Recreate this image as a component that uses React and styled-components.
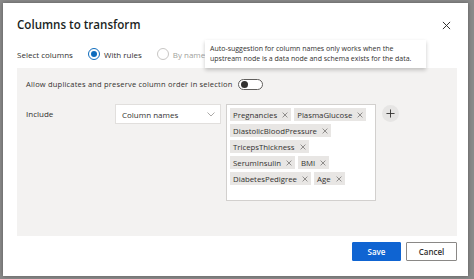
import styled, { createGlobalStyle } from "styled-components";

const GlobalStyle = createGlobalStyle`
  html, body {
    margin: 0;
    padding: 0;
    background: #8a8a8a;
    overflow: hidden;
  }
  body {
    font-family: "Open Sans", "Noto Sans", sans-serif;
    color: #323130;
  }
`;

const Screen = styled.div`
  width: 474px;
  height: 279px;
  padding: 3px 0 0 3px;
  box-sizing: border-box;
`;

const Dialog = styled.div`
  position: relative;
  width: 465px;
  height: 273px;
  background: #ffffff;
  box-shadow: 0 0 4px rgba(0, 0, 0, 0.35);
  display: flex;
  flex-direction: column;
  box-sizing: border-box;
`;

const Header = styled.div`
  display: flex;
  align-items: center;
  justify-content: space-between;
  padding: 14px 17px 0 14px;
  height: 16px;
`;

const Title = styled.h1`
  margin: 0;
  font-size: 11.6px;
  font-weight: 600;
  line-height: 16px;
  color: #201f1e;
`;

const CloseButton = styled.button`
  border: none;
  background: none;
  padding: 0;
  width: 9px;
  height: 9px;
  display: flex;
  cursor: pointer;
`;

const SelectRow = styled.div`
  display: flex;
  align-items: center;
  height: 16px;
  margin: 13px 0 0 14px;
  font-size: 8px;
`;

const RowLabel = styled.span`
  width: 71px;
`;

const RadioOption = styled.label`
  display: flex;
  align-items: center;
  gap: 4px;
  margin-right: 15px;
  color: ${(p) => (p.disabled ? "#a19f9d" : "#323130")};
`;

const RadioCircle = styled.span`
  width: 12px;
  height: 12px;
  border-radius: 50%;
  box-sizing: border-box;
  border: 1px solid ${(p) => (p.checked ? "#0f6cbd" : p.disabled ? "#c8c6c4" : "#323130")};
  display: flex;
  align-items: center;
  justify-content: center;

  &::after {
    content: "";
    display: ${(p) => (p.checked ? "block" : "none")};
    width: 6px;
    height: 6px;
    border-radius: 50%;
    background: #0f6cbd;
  }
`;

const Tooltip = styled.div`
  position: absolute;
  left: 202px;
  top: 37px;
  width: 221px;
  height: 28px;
  box-sizing: border-box;
  padding: 4px 5px 0;
  background: #ffffff;
  box-shadow: 0 1.5px 4px rgba(0, 0, 0, 0.22);
  font-size: 7px;
  line-height: 10px;
  color: #323130;
  z-index: 2;
`;

const Panel = styled.div`
  margin: 6px 11px 0 14px;
  height: 168px;
  background: #f3f2f1;
  padding: 10px 9px 0;
  box-sizing: border-box;
  font-size: 8px;
`;

const ToggleRow = styled.div`
  display: flex;
  align-items: center;
  gap: 5px;
  height: 12px;
  font-size: 7.5px;
  letter-spacing: 0.2px;
`;

const Toggle = styled.span`
  width: 25px;
  height: 11px;
  border: 1px solid #605e5c;
  border-radius: 7px;
  box-sizing: border-box;
  display: flex;
  align-items: center;
  padding-left: 2px;
  background: #ffffff;

  &::after {
    content: "";
    width: 7px;
    height: 7px;
    border-radius: 50%;
    background: #323130;
  }
`;

const IncludeRow = styled.div`
  display: flex;
  align-items: flex-start;
  margin-top: 14px;
`;

const IncludeLabel = styled.span`
  width: 89px;
  line-height: 20px;
`;

const Dropdown = styled.div`
  width: 106px;
  height: 20px;
  box-sizing: border-box;
  background: #ffffff;
  border: 1px solid #e1dfdd;
  display: flex;
  align-items: center;
  justify-content: space-between;
  padding: 0 5px 0 6px;
  margin-right: 5px;
`;

const TagBox = styled.div`
  width: 150px;
  height: 97px;
  box-sizing: border-box;
  background: #ffffff;
  border: 1px solid #d2d0ce;
  padding: 3px 3px;
  display: flex;
  flex-wrap: wrap;
  align-content: flex-start;
  gap: 3px 3px;
`;

const Tag = styled.span`
  display: flex;
  align-items: center;
  height: 13px;
  padding: 0 3px;
  gap: 5px;
  background: #e8e6e4;
  font-size: 7.8px;
  white-space: nowrap;
`;

const AddButton = styled.button`
  width: 17px;
  height: 17px;
  margin: 1px 0 0 6px;
  border: none;
  border-radius: 50%;
  background: #e6e5e4;
  padding: 0;
  display: flex;
  align-items: center;
  justify-content: center;
`;

const Footer = styled.div`
  display: flex;
  justify-content: flex-end;
  gap: 5px;
  margin: 6px 11px 0 0;
`;

const Button = styled.button`
  height: 19px;
  width: ${(p) => p.width}px;
  box-sizing: border-box;
  font-family: "Open Sans", "Noto Sans", sans-serif;
  font-size: 8px;
  font-weight: 600;
  padding: 0;
  border: 1px solid ${(p) => (p.primary ? "#0f64d2" : "#8a8886")};
  background: ${(p) => (p.primary ? "#0f64d2" : "#ffffff")};
  color: ${(p) => (p.primary ? "#ffffff" : "#323130")};
  border-radius: 1px;
`;

const XIcon = ({ size = 6, color = "#605e5c" }) => (
  <svg width={size} height={size} viewBox="0 0 10 10">
    <path d="M1 1L9 9M9 1L1 9" stroke={color} strokeWidth="1.1" />
  </svg>
);

const columns = [
  "Pregnancies",
  "PlasmaGlucose",
  "DiastolicBloodPressure",
  "TricepsThickness",
  "SerumInsulin",
  "BMI",
  "DiabetesPedigree",
  "Age",
];

export default function App() {
  return (
    <>
      <GlobalStyle />
      <Screen>
        <Dialog>
          <Header>
            <Title>Columns to transform</Title>
            <CloseButton aria-label="Close">
              <XIcon size={9} color="#323130" />
            </CloseButton>
          </Header>

          <SelectRow>
            <RowLabel>Select columns</RowLabel>
            <RadioOption>
              <RadioCircle checked />
              With rules
            </RadioOption>
            <RadioOption disabled>
              <RadioCircle disabled />
              By name
            </RadioOption>
          </SelectRow>

          <Tooltip>
            Auto-suggestion for column names only works when the
            <br />
            upstream node is a data node and schema exists for the data.
          </Tooltip>

          <Panel>
            <ToggleRow>
              Allow duplicates and preserve column order in selection
              <Toggle />
            </ToggleRow>
            <IncludeRow>
              <IncludeLabel>Include</IncludeLabel>
              <Dropdown>
                Column names
                <svg width="8" height="5" viewBox="0 0 8 5">
                  <path d="M0.5 0.5L4 4L7.5 0.5" stroke="#a19f9d" strokeWidth="0.9" fill="none" />
                </svg>
              </Dropdown>
              <TagBox>
                {columns.map((c) => (
                  <Tag key={c}>
                    {c}
                    <XIcon size={6} />
                  </Tag>
                ))}
              </TagBox>
              <AddButton aria-label="Add">
                <svg width="9" height="9" viewBox="0 0 10 10">
                  <path d="M5 0.5V9.5M0.5 5H9.5" stroke="#323130" strokeWidth="1" />
                </svg>
              </AddButton>
            </IncludeRow>
          </Panel>

          <Footer>
            <Button primary width={49}>Save</Button>
            <Button width={51}>Cancel</Button>
          </Footer>
        </Dialog>
      </Screen>
    </>
  );
}
